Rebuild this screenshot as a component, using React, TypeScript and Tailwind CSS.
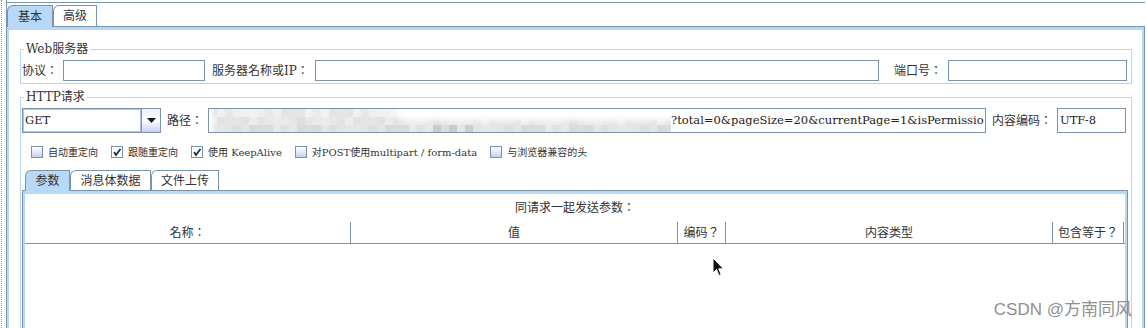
import React from "react";

type TabProps = { label: string; selected?: boolean; className: string };

const Tab: React.FC<TabProps> = ({ label, selected, className }) => (
  <div
    className={`flex items-center justify-center border border-b-0 border-[#7a94ad] rounded-tl-[6px] text-[12px] text-[#333] ${
      selected ? "relative z-10 bg-[#b8d8f8]" : "bg-white"
    } ${className}`}
  >
    {label}
  </div>
);

const Field: React.FC<{ className: string; children?: React.ReactNode }> = ({ className, children }) => (
  <div
    className={`min-w-0 border border-[#7a94ad] bg-white flex items-center overflow-hidden text-[11.5px] text-[#222] whitespace-nowrap ${className}`}
  >
    {children}
  </div>
);

const CheckBox: React.FC<{ label: string; checked?: boolean }> = ({ label, checked }) => (
  <label className="flex items-center gap-[5px] text-[10px] text-[#333] whitespace-nowrap">
    <span
      className={`w-[12px] h-[12px] border border-[#7a94ad] flex items-center justify-center ${
        checked ? "bg-white" : "bg-linear-to-b from-white via-[#e4e8f8] to-[#c6cdf0]"
      }`}
    >
      {checked && (
        <svg width="10" height="10" viewBox="0 0 10 10">
          <path d="M2 5 L4 8 L8.5 2" fill="none" stroke="#1c2a4a" strokeWidth="1.8" />
        </svg>
      )}
    </span>
    {label}
  </label>
);

// pixelated blur over the hidden part of the path
const mosaic = Array.from({ length: 3 * 58 }, (_, i) => {
  const row = Math.floor(i / 58);
  const col = i % 58;
  const n = (col * 73 + row * 151 + col * col * 7 + row * col * 11) % 17;
  const dark = row === 2 && col > 26 && col < 34 && col % 2 === 0 ? -16 : 0;
  const base = row === 2 ? 218 : row === 1 ? 222 : 228;
  const v = base + n + dark;
  return `rgb(${v},${v},${v})`;
});

const columns = ["名称：", "值", "编码？", "内容类型", "包含等于？"];

export default function App() {
  return (
    <div className="relative w-[1147px] h-[328px] overflow-hidden bg-white flex font-['DejaVu_Serif','Noto_Sans_CJK_TC',serif] text-[#333]">
      <div className="ml-[1px] w-[5px] shrink-0 border-l border-dotted border-[#8c9aa8]" />
      <div className="w-[1139px] shrink-0 border-l border-[#7a94ad] pt-[2px]">
        <div className="border-t border-[#7a94ad] pt-[2px]">
          {/* outer tabs */}
          <div className="flex h-[21px] items-start">
            <Tab label="基本" selected className="w-[46px] h-[22px]" />
            <Tab label="高级" className="w-[44px] h-[21px]" />
          </div>

          <div className="border-t border-r border-[#7a94ad]">
            <div className="border-t-[3px] border-l-[2px] border-r-[2px] border-[#b8d8f8] pl-[11px] pr-[10px]">
              {/* Web服务器 */}
              <fieldset className="mt-[11px] border border-[#b8d6f2] min-w-0">
                <legend className="ml-[3px] px-[2px] text-[12px] leading-[16px] text-[#333]">Web服务器</legend>
                <div className="flex items-center pt-[3px] pb-[2px] pl-[1px] pr-[4px] text-[12px]">
                  <span className="w-[41px] shrink-0">协议：</span>
                  <Field className="w-[142px] h-[21px] shrink-0" />
                  <span className="ml-[7px] w-[103px] shrink-0">服务器名称或IP：</span>
                  <Field className="flex-1 h-[21px]" />
                  <span className="ml-[15px] w-[54px] shrink-0">端口号：</span>
                  <Field className="w-[179px] h-[21px] shrink-0" />
                </div>
              </fieldset>

              {/* HTTP请求 */}
              <fieldset className="mt-[5px] border border-[#b8d6f2] min-w-0">
                <legend className="ml-[3px] px-[2px] text-[12px] leading-[16px] text-[#333]">HTTP请求</legend>
                <div className="flex items-center pt-[3px] pl-[1px] pr-[5px] text-[12px]">
                  <div className="w-[139px] h-[25px] shrink-0 border border-[#7a94ad] flex">
                    <div className="flex-1 border border-[#a9c6e6] flex items-center pl-[1px] text-[11.5px] text-[#222]">
                      GET
                    </div>
                    <div className="w-[19px] border-l border-[#7a94ad] bg-linear-to-b from-[#eef0fc] via-white to-[#c9d0f2] flex items-center justify-center">
                      <svg width="9" height="5" viewBox="0 0 9 5">
                        <path d="M0 0 H9 L4.5 5 Z" fill="#111827" />
                      </svg>
                    </div>
                  </div>
                  <span className="ml-[6px] w-[41px] shrink-0">路径：</span>
                  <Field className="flex-1 h-[25px]">
                    <div className="relative w-[462px] h-full shrink-0 overflow-hidden">
                      <div className="grid grid-cols-[repeat(58,8px)] grid-rows-[repeat(3,8px)] blur-[0.6px]">
                        {mosaic.map((c, i) => (
                          <div key={i} style={{ backgroundColor: c }} />
                        ))}
                      </div>
                      <div className="absolute left-[185px] top-[-9px] w-[290px] h-[20px] rounded-full bg-white blur-[3px]" />
                      <div className="absolute left-[-6px] top-[-4px] w-[10px] h-[32px] rounded-full bg-white blur-[2px]" />
                    </div>
                    <span>?total=0&amp;pageSize=20&amp;currentPage=1&amp;isPermissio</span>
                  </Field>
                  <span className="ml-[6px] w-[65px] shrink-0">内容编码：</span>
                  <Field className="w-[69px] h-[25px] shrink-0 pl-[2px]">UTF-8</Field>
                </div>

                <div className="mt-[8px] h-[22px] flex items-center pl-[10px] gap-[13px]">
                  <CheckBox label="自动重定向" />
                  <CheckBox label="跟随重定向" checked />
                  <CheckBox label="使用 KeepAlive" checked />
                  <CheckBox label="对POST使用multipart / form-data" />
                  <CheckBox label="与浏览器兼容的头" />
                </div>

                {/* inner tabs */}
                <div className="mt-[7px] ml-[4px] flex h-[20px] items-start">
                  <Tab label="参数" selected className="w-[45px] h-[21px]" />
                  <Tab label="消息体数据" className="w-[81px] h-[20px]" />
                  <Tab label="文件上传" className="w-[68px] h-[20px]" />
                </div>
                <div className="ml-[1px] mr-[3px] border-t border-l border-r border-[#7a94ad]">
                  <div className="border-t-[3px] border-l-[2px] border-r-[2px] border-[#b8d8f8] h-[180px] overflow-hidden">
                    <div className="pt-[6px] leading-[16px] text-center text-[12px]">同请求一起发送参数：</div>
                    <div className="mt-[6px] grid grid-cols-[326px_327px_48px_327px_71px] h-[22px] border-b border-[#7a94ad] text-[12px] text-[#333]">
                      {columns.map((c) => (
                        <div key={c} className="flex items-center justify-center border-r border-[#7a94ad]">
                          {c}
                        </div>
                      ))}
                    </div>
                  </div>
                </div>
              </fieldset>
            </div>
          </div>
        </div>
      </div>

      {/* mouse pointer */}
      <svg className="absolute left-[712px] top-[257px]" width="13" height="20" viewBox="0 0 13 20">
        <path d="M1 1 L1 16 L4.5 12.5 L7 18.5 L9.2 17.6 L6.8 11.8 L11.5 11.8 Z" fill="#111" stroke="#fff" strokeWidth="1" />
      </svg>

      {/* watermark */}
      <div className="absolute right-[15px] bottom-[8px] leading-[20px] text-[17px] text-[#8f8f8f] font-['Liberation_Sans','Noto_Sans_CJK_SC',sans-serif]">
        CSDN @方南同风
      </div>
    </div>
  );
}
